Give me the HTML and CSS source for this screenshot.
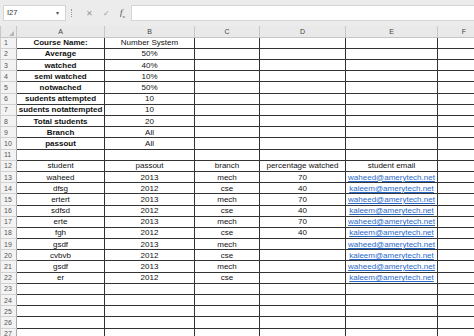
FILE: index.html
```html
<!DOCTYPE html>
<html lang="en">
<head>
  <meta charset="UTF-8" />
  <title>Book1 - Excel</title>
  <link rel="stylesheet" href="styles.css">
</head>
<body>
  <div class="formula-bar">
    <div class="name-box">I27<span class="caret">&#9662;</span></div>
    <div class="grip"></div>
    <div class="fx-buttons">
      <span class="btn">&#10005;</span>
      <span class="btn">&#10003;</span>
      <span class="btn fx"><i>f</i><sub>x</sub></span>
    </div>
    <div class="formula-input"></div>
  </div>
  <div class="sheet">
    <table class="grid">
      <colgroup>
        <col class="c-num"><col class="c-a"><col class="c-b"><col class="c-c"><col class="c-d"><col class="c-e"><col class="c-f">
      </colgroup>
      <thead>
        <tr>
          <th class="corner"><span class="tri"></span></th>
          <th>A</th><th>B</th><th>C</th><th>D</th><th>E</th><th>F</th>
        </tr>
      </thead>
      <tbody id="rows"></tbody>
    </table>
  </div>

  <script>
    var summary = [
      ['Course Name:', 'Number System'],
      ['Average', '50%'],
      ['watched', '40%'],
      ['semi watched', '10%'],
      ['notwached', '50%'],
      ['sudents attempted', '10'],
      ['sudents notattempted', '10'],
      ['Total students', '20'],
      ['Branch', 'All'],
      ['passout', 'All']
    ];
    var students = [
      ['waheed', '2013', 'mech', '70', 'waheed@amerytech.net'],
      ['dfsg', '2012', 'cse', '40', 'kaleem@amerytech.net'],
      ['ertert', '2013', 'mech', '70', 'waheed@amerytech.net'],
      ['sdfsd', '2012', 'cse', '40', 'kaleem@amerytech.net'],
      ['erte', '2013', 'mech', '70', 'waheed@amerytech.net'],
      ['fgh', '2012', 'cse', '40', 'kaleem@amerytech.net'],
      ['gsdf', '2013', 'mech', '', 'waheed@amerytech.net'],
      ['cvbvb', '2012', 'cse', '', 'kaleem@amerytech.net'],
      ['gsdf', '2013', 'mech', '', 'waheed@amerytech.net'],
      ['er', '2012', 'cse', '', 'kaleem@amerytech.net']
    ];

    function addRow(n, cells, bold) {
      var tr = document.createElement('tr');
      var html = '<td class="num">' + n + '</td>';
      for (var i = 0; i < 6; i++) {
        var v = cells[i] || '';
        var cls = (bold && i == 0) ? ' class="b"' : '';
        if (v.indexOf('@') > 0) v = '<a href="#">' + v + '</a>';
        html += '<td' + cls + '>' + v + '</td>';
      }
      tr.innerHTML = html;
      document.getElementById('rows').appendChild(tr);
    }

    var n = 1;
    summary.forEach(function (r) { addRow(n++, r, true); });
    addRow(n++, []);
    addRow(n++, ['student', 'passout', 'branch', 'percentage watched', 'student email']);
    students.forEach(function (r) { addRow(n++, r); });
    while (n <= 27) addRow(n++, []);
  </script>
</body>
</html>
```

FILE: styles.css
```css
body {
  margin: 0;
  width: 474px;
  height: 336px;
  overflow: hidden;
  background: #fff;
  font-family: "Liberation Sans", Arial, sans-serif;
  color: #111;
}
.formula-bar {
  display: flex;
  align-items: stretch;
  height: 16px;
  padding: 5px 0 5px 3px;
  background: #ececec;
}
.name-box {
  width: 58px;
  background: #fff;
  border: 1px solid #d4d4d4;
  font-size: 7.5px;
  color: #333;
  line-height: 14px;
  padding-left: 3px;
  position: relative;
}
.caret {
  position: absolute;
  right: 6px;
  top: 0;
  font-size: 6px;
  color: #555;
}
.grip {
  width: 0;
  margin: 4px 5px 4px 5px;
  border-left: 1px dotted #999;
}
.fx-buttons {
  display: flex;
  align-items: center;
  gap: 10px;
  padding: 0 6px 0 9px;
  color: #9a9a9a;
  font-size: 8px;
}
.fx {
  color: #444;
  font-family: "Liberation Serif", serif;
  font-size: 9px;
}
.fx sub {
  font-size: 5px;
}
.formula-input {
  flex: 1;
  background: #fff;
  border: 1px solid #d4d4d4;
  border-right: none;
}
.sheet {
  overflow: hidden;
}
.grid {
  border-collapse: collapse;
  table-layout: fixed;
  width: 490px;
  font-size: 8px;
}
.c-num { width: 16px; }
.c-a { width: 88px; }
.c-b { width: 90px; }
.c-c { width: 65px; }
.c-d { width: 86px; }
.c-e { width: 92px; }
.c-f { width: 53px; }
.grid th {
  height: 10px;
  padding: 0;
  font-weight: normal;
  color: #444;
  background: #e9e9e9;
  border: 1px solid #c6c6c6;
  border-top: none;
  line-height: 9px;
  font-size: 7px;
}
.grid th.corner {
  position: relative;
}
.tri {
  position: absolute;
  right: 2px;
  bottom: 1px;
  border-left: 5px solid transparent;
  border-bottom: 5px solid #b5b5b5;
}
.grid tr {
  height: 11.2px;
}
.grid td {
  padding: 0;
  text-align: center;
  border: 1px solid #333;
  line-height: 9px;
  white-space: nowrap;
  overflow: hidden;
}
.grid td.num {
  background: #f3f3f3;
  color: #555;
  border-color: #d0d0d0;
  border-right: 1px solid #a8a8a8;
  font-size: 7px;
  text-align: left;
  padding-left: 3px;
}
.grid td.b {
  font-weight: bold;
}
.grid a {
  color: #2a6acb;
  text-decoration: underline;
}
```
